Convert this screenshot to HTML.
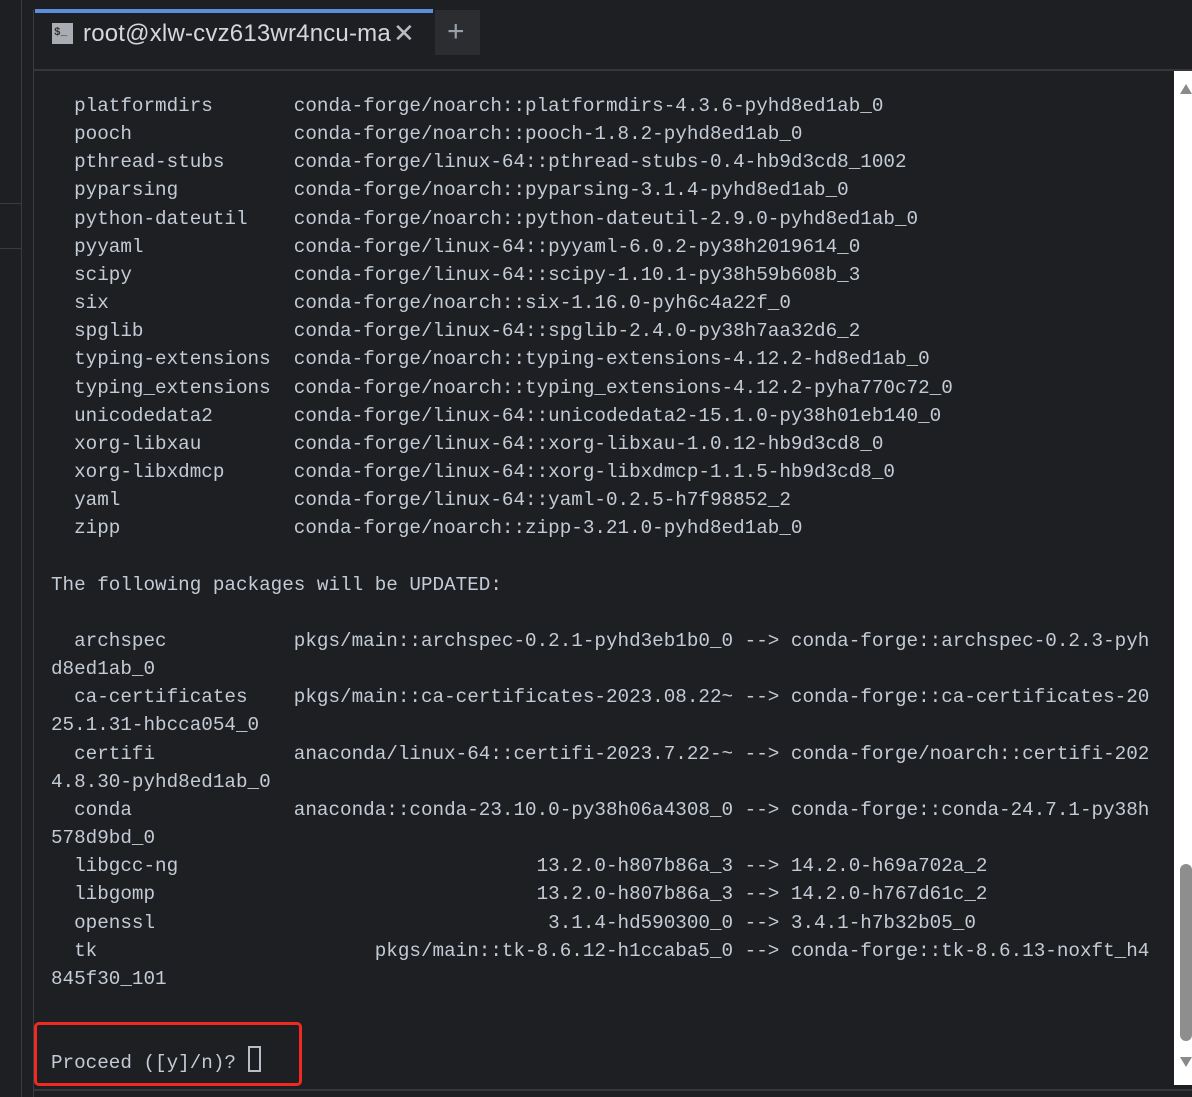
<!DOCTYPE html>
<html><head><meta charset="utf-8"><style>
html,body{margin:0;padding:0;}
body{width:1192px;height:1097px;background:#1e1f22;position:relative;overflow:hidden;}
.abs{position:absolute;}
pre{position:absolute;left:51px;top:92px;margin:0;font-family:"Liberation Mono","Noto Serif CJK SC",monospace;font-size:19.28px;line-height:28.15px;color:#c3cbd6;white-space:pre;}
.tab{font-family:"Liberation Sans","DejaVu Sans",sans-serif;font-size:22px;color:#d4d8de;}
</style></head><body>
<div class="abs" style="left:21px;top:0;width:1px;height:1097px;background:#3a3b3f"></div>
<div class="abs" style="left:0;top:203px;width:21px;height:1px;background:#3a3b3f"></div>
<div class="abs" style="left:0;top:248px;width:21px;height:1px;background:#3a3b3f"></div>
<div class="abs" style="left:33px;top:10px;width:1px;height:1087px;background:#3a3b3f"></div>
<div class="abs" style="left:35px;top:9px;width:398px;height:4px;background:#5b8fdc"></div>
<div class="abs" style="left:435px;top:10px;width:45px;height:45px;background:#2b2d31"></div>
<div class="abs tab" style="left:447px;top:15px;font-size:30px;color:#9aa0a8">+</div>
<div class="abs" style="left:34px;top:69px;width:1158px;height:2px;background:#34363a"></div>
<div class="abs" style="left:52px;top:23px;width:21px;height:21px;background:#a9acb2;font:bold 11px 'Liberation Mono',monospace;color:#333;line-height:21px;text-indent:2px">$_</div>
<div class="abs tab" style="left:83px;top:20px;font-size:24px;letter-spacing:0.2px">root@xlw-cvz613wr4ncu-ma</div>
<div class="abs tab" style="left:393px;top:18px;font-size:26px;color:#b8bcc2">✕</div>
<div class="abs" style="left:1174px;top:71px;width:18px;height:1014px;background:#fff"></div>
<div class="abs" style="left:1180px;top:84px;width:0;height:0;border-left:6px solid transparent;border-right:6px solid transparent;border-bottom:10px solid #8a8a8a"></div>
<div class="abs" style="left:1180px;top:1057px;width:0;height:0;border-left:6px solid transparent;border-right:6px solid transparent;border-top:10px solid #8a8a8a"></div>
<div class="abs" style="left:1180px;top:864px;width:12px;height:177px;background:#8e8e8e;border-radius:6px"></div>
<div class="abs" style="left:34px;top:1089px;width:1158px;height:2px;background:#34363a"></div>
<pre>  platformdirs       conda-forge/noarch::platformdirs-4.3.6-pyhd8ed1ab_0
  pooch              conda-forge/noarch::pooch-1.8.2-pyhd8ed1ab_0
  pthread-stubs      conda-forge/linux-64::pthread-stubs-0.4-hb9d3cd8_1002
  pyparsing          conda-forge/noarch::pyparsing-3.1.4-pyhd8ed1ab_0
  python-dateutil    conda-forge/noarch::python-dateutil-2.9.0-pyhd8ed1ab_0
  pyyaml             conda-forge/linux-64::pyyaml-6.0.2-py38h2019614_0
  scipy              conda-forge/linux-64::scipy-1.10.1-py38h59b608b_3
  six                conda-forge/noarch::six-1.16.0-pyh6c4a22f_0
  spglib             conda-forge/linux-64::spglib-2.4.0-py38h7aa32d6_2
  typing-extensions  conda-forge/noarch::typing-extensions-4.12.2-hd8ed1ab_0
  typing_extensions  conda-forge/noarch::typing_extensions-4.12.2-pyha770c72_0
  unicodedata2       conda-forge/linux-64::unicodedata2-15.1.0-py38h01eb140_0
  xorg-libxau        conda-forge/linux-64::xorg-libxau-1.0.12-hb9d3cd8_0
  xorg-libxdmcp      conda-forge/linux-64::xorg-libxdmcp-1.1.5-hb9d3cd8_0
  yaml               conda-forge/linux-64::yaml-0.2.5-h7f98852_2
  zipp               conda-forge/noarch::zipp-3.21.0-pyhd8ed1ab_0

The following packages will be UPDATED:

  archspec           pkgs/main::archspec-0.2.1-pyhd3eb1b0_0 --> conda-forge::archspec-0.2.3-pyh
d8ed1ab_0
  ca-certificates    pkgs/main::ca-certificates-2023.08.22~ --> conda-forge::ca-certificates-20
25.1.31-hbcca054_0
  certifi            anaconda/linux-64::certifi-2023.7.22-~ --> conda-forge/noarch::certifi-202
4.8.30-pyhd8ed1ab_0
  conda              anaconda::conda-23.10.0-py38h06a4308_0 --> conda-forge::conda-24.7.1-py38h
578d9bd_0
  libgcc-ng                               13.2.0-h807b86a_3 --> 14.2.0-h69a702a_2
  libgomp                                 13.2.0-h807b86a_3 --> 14.2.0-h767d61c_2
  openssl                                  3.1.4-hd590300_0 --> 3.4.1-h7b32b05_0
  tk                        pkgs/main::tk-8.6.12-h1ccaba5_0 --> conda-forge::tk-8.6.13-noxft_h4
845f30_101


Proceed ([y]/n)? </pre>
<div class="abs" style="left:248px;top:1046px;width:9px;height:22px;border:2px solid #b8bec8"></div>
<div class="abs" style="left:34px;top:1022px;width:262px;height:58px;border:3px solid #f02a22;border-radius:5px"></div>
</body></html>
